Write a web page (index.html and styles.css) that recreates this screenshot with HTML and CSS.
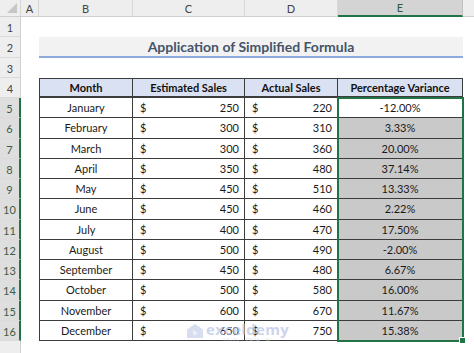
FILE: index.html
```html
<!DOCTYPE html>
<html>
<head>
<meta charset="utf-8">
<link rel="stylesheet" href="styles.css">
</head>
<body>
<div class="sheet">
  <div class="corner"><span class="tri"></span></div>
  <div class="ch">A</div>
  <div class="ch">B</div>
  <div class="ch">C</div>
  <div class="ch">D</div>
  <div class="ch ch-sel">E</div>
  <div class="ch ch-last"></div>

  <div class="rh">1</div><div class="blank span6"></div>

  <div class="rh">2</div><div class="blank"></div>
  <div class="title">Application of Simplified Formula</div>
  <div class="blank"></div>

  <div class="rh">3</div><div class="blank span6"></div>

  <div class="rh">4</div><div class="blank"></div>
  <div class="th first">Month</div>
  <div class="th">Estimated Sales</div>
  <div class="th">Actual Sales</div>
  <div class="th">Percentage Variance</div>
  <div class="blank"></div>

  <div class="rh sel">5</div><div class="blank"></div>
  <div class="td first">January</div>
  <div class="td money"><span>$</span><span>250</span></div>
  <div class="td money"><span>$</span><span>220</span></div>
  <div class="td pct active">-12.00%</div>
  <div class="blank"></div>

  <div class="rh sel">6</div><div class="blank"></div>
  <div class="td first">February</div>
  <div class="td money"><span>$</span><span>300</span></div>
  <div class="td money"><span>$</span><span>310</span></div>
  <div class="td pct">3.33%</div>
  <div class="blank"></div>

  <div class="rh sel">7</div><div class="blank"></div>
  <div class="td first">March</div>
  <div class="td money"><span>$</span><span>300</span></div>
  <div class="td money"><span>$</span><span>360</span></div>
  <div class="td pct">20.00%</div>
  <div class="blank"></div>

  <div class="rh sel">8</div><div class="blank"></div>
  <div class="td first">April</div>
  <div class="td money"><span>$</span><span>350</span></div>
  <div class="td money"><span>$</span><span>480</span></div>
  <div class="td pct">37.14%</div>
  <div class="blank"></div>

  <div class="rh sel">9</div><div class="blank"></div>
  <div class="td first">May</div>
  <div class="td money"><span>$</span><span>450</span></div>
  <div class="td money"><span>$</span><span>510</span></div>
  <div class="td pct">13.33%</div>
  <div class="blank"></div>

  <div class="rh sel">10</div><div class="blank"></div>
  <div class="td first">June</div>
  <div class="td money"><span>$</span><span>450</span></div>
  <div class="td money"><span>$</span><span>460</span></div>
  <div class="td pct">2.22%</div>
  <div class="blank"></div>

  <div class="rh sel">11</div><div class="blank"></div>
  <div class="td first">July</div>
  <div class="td money"><span>$</span><span>400</span></div>
  <div class="td money"><span>$</span><span>470</span></div>
  <div class="td pct">17.50%</div>
  <div class="blank"></div>

  <div class="rh sel">12</div><div class="blank"></div>
  <div class="td first">August</div>
  <div class="td money"><span>$</span><span>500</span></div>
  <div class="td money"><span>$</span><span>490</span></div>
  <div class="td pct">-2.00%</div>
  <div class="blank"></div>

  <div class="rh sel">13</div><div class="blank"></div>
  <div class="td first">September</div>
  <div class="td money"><span>$</span><span>450</span></div>
  <div class="td money"><span>$</span><span>480</span></div>
  <div class="td pct">6.67%</div>
  <div class="blank"></div>

  <div class="rh sel">14</div><div class="blank"></div>
  <div class="td first">October</div>
  <div class="td money"><span>$</span><span>500</span></div>
  <div class="td money"><span>$</span><span>580</span></div>
  <div class="td pct">16.00%</div>
  <div class="blank"></div>

  <div class="rh sel">15</div><div class="blank"></div>
  <div class="td first">November</div>
  <div class="td money"><span>$</span><span>600</span></div>
  <div class="td money"><span>$</span><span>670</span></div>
  <div class="td pct">11.67%</div>
  <div class="blank"></div>

  <div class="rh sel">16</div><div class="blank"></div>
  <div class="td first">December</div>
  <div class="td money"><span>$</span><span>650</span></div>
  <div class="td money"><span>$</span><span>750</span></div>
  <div class="td pct">15.38%</div>
  <div class="blank"></div>

  <div class="rh"></div><div class="blank span6"></div>

  <div class="selection"><span class="handle"></span></div>

  <div class="watermark">
    <svg class="wm-logo" width="18" height="16" viewBox="0 0 18 16">
      <path d="M9 1 L17 6.5 L17 15 L1 15 L1 6.5 Z" fill="#c9d3ec"/>
      <path d="M6.5 7 L12 10.5 L9.3 11 L8.3 13.5 Z" fill="#eef1f9"/>
    </svg>
    <div class="wm-text">
      <span class="wm-name">exceldemy</span>
      <span class="wm-sub">EXCEL · DATA · BI</span>
    </div>
  </div>
</div>
</body>
</html>
```
FILE: styles.css
```css
html, body {
  margin: 0;
  padding: 0;
  background: #ffffff;
}
body {
  font-family: Lato, "Open Sans", sans-serif;
  font-size: 11px;
  color: #1a1a1a;
  overflow: hidden;
}
.sheet {
  position: relative;
  display: grid;
  grid-template-columns: 21px 18px 94px 112px 93px 125px 11px;
  grid-template-rows: 17px repeat(17, 20.25px);
}
.corner {
  position: relative;
  background: #eeeeee;
  border-right: 1px solid #d6d6d6;
  border-bottom: 1px solid #cfcfcf;
}
.tri {
  position: absolute;
  right: 3px;
  bottom: 3px;
  width: 0;
  height: 0;
  border-left: 10px solid transparent;
  border-bottom: 10px solid #c6c6c6;
}
.ch {
  display: flex;
  align-items: center;
  justify-content: center;
  background: #eeeeee;
  border-right: 1px solid #d6d6d6;
  border-bottom: 1px solid #cfcfcf;
  color: #444444;
  font-size: 11px;
}
.ch-sel {
  background: #d4d4d4;
  color: #2f5a3f;
  border-bottom: 2px solid #217346;
  border-right-color: #c0c0c0;
}
.ch-last {
  border-right: none;
}
.rh {
  display: flex;
  align-items: center;
  justify-content: center;
  background: #eeeeee;
  border-bottom: 1px solid #dadada;
  border-right: 1px solid #d0d0d0;
  color: #444444;
  font-size: 11px;
  padding-top: 2px;
  box-sizing: border-box;
}
.rh.sel {
  background: #dedede;
  color: #3d5c48;
  border-right: 2px solid #217346;
}
.blank {
  background: #ffffff;
}
.span6 {
  grid-column: 2 / 8;
}
.title {
  grid-column: 3 / 7;
  display: flex;
  align-items: center;
  justify-content: center;
  background: #f2f2f2;
  border-bottom: 2px solid #8ea9db;
  color: #44546a;
  font-weight: 700;
  font-size: 14px;
  box-sizing: border-box;
}
.th, .td {
  display: flex;
  align-items: center;
  justify-content: center;
  border-right: 1px solid #3c3c3c;
  border-bottom: 1px solid #3c3c3c;
  box-sizing: border-box;
}
.th {
  background: #d9e1f2;
  font-weight: 700;
  border-top: 1px solid #3c3c3c;
  border-bottom: 2px solid #3c3c3c;
  color: #111111;
}
.first {
  border-left: 1px solid #3c3c3c;
}
.money {
  justify-content: space-between;
  padding: 0 5px 0 7px;
}
.pct {
  background: #c9c9c9;
}
.pct.active {
  background: #ffffff;
}
.selection {
  position: absolute;
  grid-column: 6 / 7;
  grid-row: 6 / 18;
  top: -1px;
  left: -1px;
  right: -1px;
  bottom: -1px;
  border: 2px solid #217346;
  pointer-events: none;
  z-index: 2;
}
.handle {
  position: absolute;
  right: -4px;
  bottom: -4px;
  width: 5px;
  height: 5px;
  background: #217346;
  border: 1px solid #ffffff;
}
.watermark {
  position: absolute;
  left: 186px;
  top: 321px;
  display: flex;
  align-items: flex-start;
  gap: 2px;
  z-index: 3;
  opacity: 0.75;
  pointer-events: none;
}
.wm-logo {
  margin-top: 2px;
}
.wm-text {
  display: flex;
  flex-direction: column;
  align-items: center;
}
.wm-name {
  font-family: "Open Sans", sans-serif;
  font-weight: 700;
  font-size: 15px;
  line-height: 16px;
  color: #bcc7e8;
  letter-spacing: 0.3px;
}
.wm-sub {
  font-family: "Open Sans", sans-serif;
  font-size: 4px;
  line-height: 5px;
  color: #cdd3e3;
  letter-spacing: 1px;
}
```
